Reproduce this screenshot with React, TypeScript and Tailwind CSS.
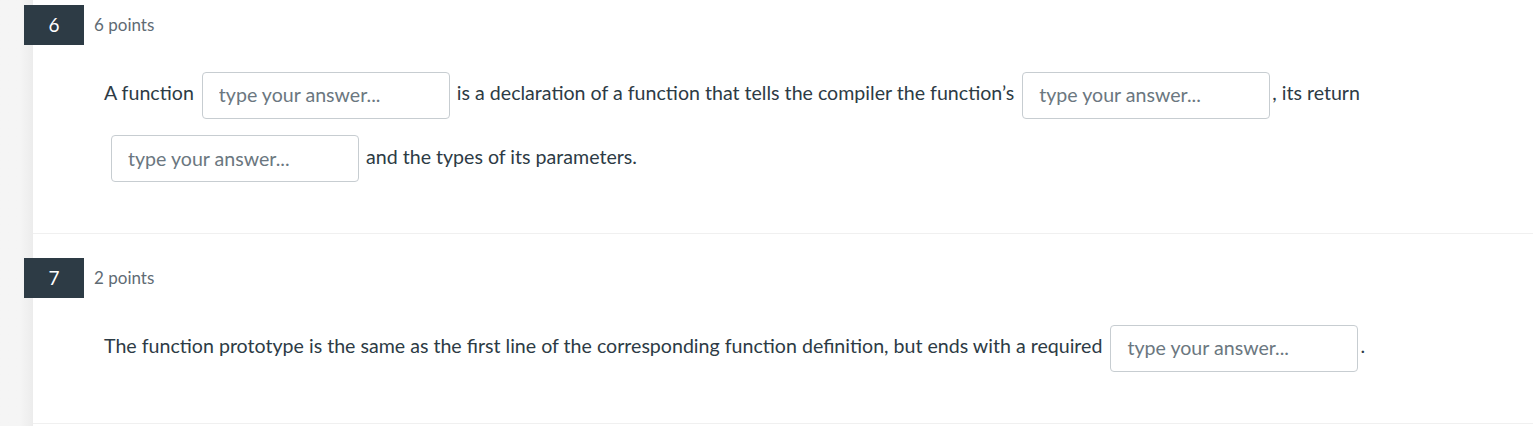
import React from 'react';

function Blank({ className = '' }: { className?: string }) {
  return (
    <input
      type="text"
      placeholder="type your answer..."
      className={`inline-block h-[47px] w-[248px] rounded-[4px] border border-[#c7cdd1] bg-white pl-4 pr-3 align-middle text-[19.6px] text-[#2d3b45] placeholder:text-[#6b7780] my-[7px] mr-[2px] ${className}`}
    />
  );
}

function Question({
  number,
  points,
  children,
  top,
}: {
  number: number;
  points: string;
  children: React.ReactNode;
  top: string;
}) {
  return (
    <div className={`border-b border-[#f0f0f0] ${top}`}>
      <div className="flex items-center -ml-[9px]">
        <div className="flex h-10 w-[60px] items-center justify-center bg-[#2d3b45] text-[19px] text-white">
          {number}
        </div>
        <span className="ml-[10px] text-[17px] text-[#5f6b74]">{points}</span>
      </div>
      <div className="pl-[71px] pr-[120px] pt-[17px] pb-[44px] text-[19.6px] leading-[62px] text-[#2d3b45]">
        {children}
      </div>
    </div>
  );
}

export default function App() {
  return (
    <div
      className="flex h-[426px] w-[1533px] overflow-hidden bg-white"
      style={{ fontFamily: 'Lato, "Open Sans", sans-serif' }}
    >
      <div className="w-[33px] shrink-0 bg-gradient-to-r from-[#f5f5f5] from-60% to-[#ececec]" />
      <div className="flex-1">
        <Question number={6} points="6 points" top="pt-[5px]">
          A function <Blank className="ml-[3px]" /> is a declaration of a function that tells the compiler the function’s{' '}
          <Blank className="ml-[3px]" />, its return <Blank className="ml-[7px]" /> and the types of its parameters.
        </Question>
        <Question number={7} points="2 points" top="pt-[24px]">
          The function prototype is the same as the first line of the corresponding function definition, but ends with a required{' '}
          <Blank className="ml-[3px]" />.
        </Question>
      </div>
    </div>
  );
}
